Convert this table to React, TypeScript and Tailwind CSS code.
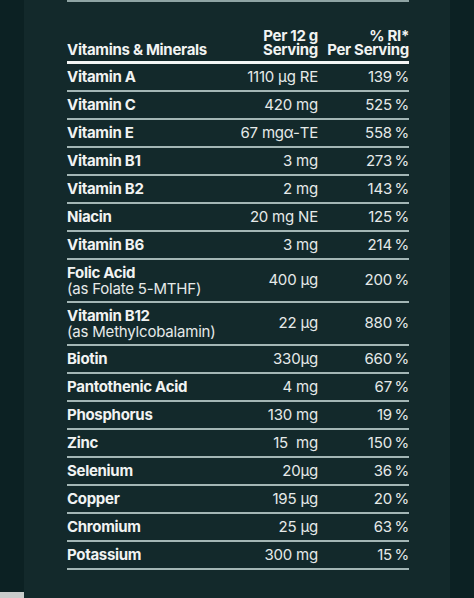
import React from "react";

interface Row {
    name: string;
    sub?: string;
    amount: string;
    ri: string;
}

const rows: Row[] = [
    { name: "Vitamin A", amount: "1110 µg RE", ri: "139\u2009%" },
    { name: "Vitamin C", amount: "420 mg", ri: "525\u2009%" },
    { name: "Vitamin E", amount: "67 mgα-TE", ri: "558\u2009%" },
    { name: "Vitamin B1", amount: "3 mg", ri: "273\u2009%" },
    { name: "Vitamin B2", amount: "2 mg", ri: "143\u2009%" },
    { name: "Niacin", amount: "20 mg NE", ri: "125\u2009%" },
    { name: "Vitamin B6", amount: "3 mg", ri: "214\u2009%" },
    { name: "Folic Acid", sub: "(as Folate 5-MTHF)", amount: "400 µg", ri: "200\u2009%" },
    { name: "Vitamin B12", sub: "(as Methylcobalamin)", amount: "22 µg", ri: "880\u2009%" },
    { name: "Biotin", amount: "330µg", ri: "660\u2009%" },
    { name: "Pantothenic Acid", amount: "4 mg", ri: "67\u2009%" },
    { name: "Phosphorus", amount: "130 mg", ri: "19\u2009%" },
    { name: "Zinc", amount: "15\u00a0 mg", ri: "150\u2009%" },
    { name: "Selenium", amount: "20µg", ri: "36\u2009%" },
    { name: "Copper", amount: "195 µg", ri: "20\u2009%" },
    { name: "Chromium", amount: "25 µg", ri: "63\u2009%" },
    { name: "Potassium", amount: "300 mg", ri: "15\u2009%" },
];

export default function App() {
    return (
        <div className="flex h-[598px] w-[474px] overflow-hidden bg-[#0c2123] font-['Inter',sans-serif] text-[15px] text-[#f1f3f2]">
            {/* left gutter */}
            <div className="flex w-[24px] flex-col justify-end">
                <div className="h-[6px] bg-[#c9cccb]" />
            </div>

            {/* panel */}
            <div className="w-[426px] bg-[#13292b] pl-[43px] pr-[41px]">
                <div className="h-[2px] bg-[#8fa4a4]" />

                {/* header */}
                <div className="grid h-[59px] grid-cols-[1fr_91px_91px] items-end pb-[4px] font-bold leading-[14px] tracking-[-0.3px]">
                    <div>Vitamins &amp; Minerals</div>
                    <div className="text-right">
                        Per 12 g
                        <br />
                        Serving
                    </div>
                    <div className="text-right">
                        % RI*
                        <br />
                        Per Serving
                    </div>
                </div>
                <div className="h-[3px] bg-[#f3f5f4]" />

                {rows.map((row) => (
                    <div
                        key={row.name}
                        className={`grid grid-cols-[1fr_91px_91px] items-center border-b-2 border-[#a3b6b5] tracking-[-0.2px] ${
                            row.sub ? "h-[43px]" : "h-[28px]"
                        }`}
                    >
                        <div className={row.sub ? "leading-[16px]" : "leading-[26px]"}>
                            <div className="font-bold tracking-[-0.3px]">{row.name}</div>
                            {row.sub && <div className="text-[#e6eae9]">{row.sub}</div>}
                        </div>
                        <div className="text-right text-[#e6eae9]">{row.amount}</div>
                        <div className="text-right text-[#e6eae9]">{row.ri}</div>
                    </div>
                ))}
            </div>

            {/* right gutter */}
            <div className="flex-1" />
        </div>
    );
}
